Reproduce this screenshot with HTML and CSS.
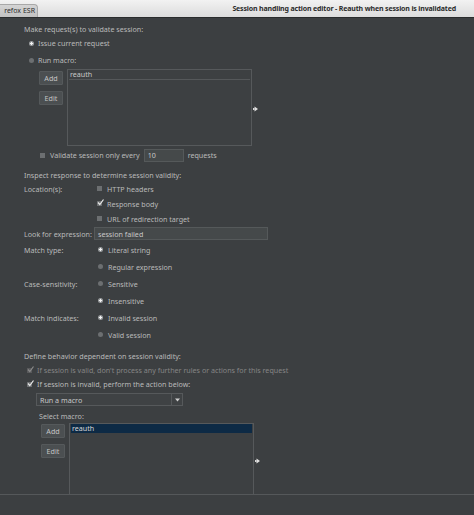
FILE: index.html
```html
<!DOCTYPE html>
<html>
<head>
<meta charset="utf-8">
<link rel="stylesheet" href="styles.css">
</head>
<body>
<div class="topbar">
  <div class="tab">refox ESR</div>
  <div class="title">Session handling action editor - Reauth when session is invalidated</div>
</div>
<div class="content">
  <div class="heading h-make">Make request(s) to validate session:</div>
  <div class="opt-row r-issue"><span class="radio on"></span>Issue current request</div>
  <div class="opt-row r-run"><span class="radio"></span>Run macro:</div>
  <div class="macro macro-top">
    <div class="btns"><div class="btn">Add</div><div class="btn">Edit</div></div>
    <div class="list"><div class="item">reauth</div></div>
    <svg class="arrow" width="5" height="6" viewBox="0 0 5 6"><rect x="0" y="2" width="1.5" height="2" fill="#d8d8d8"/><path d="M1.5 0.5 L5 3 L1.5 5.5 Z" fill="#e0e0e0"/></svg>
  </div>
  <div class="validate-row">
    <span class="cb"></span><span class="vtext">Validate session only every</span>
    <div class="input small">10</div><span>requests</span>
  </div>
  <div class="heading h-inspect">Inspect response to determine session validity:</div>
  <div class="grid">
    <div class="lbl">Location(s):</div>
    <div class="val"><span class="cb"></span>HTTP headers</div>
    <div class="lbl"></div>
    <div class="val"><span class="cb checked"><svg width="7" height="7" viewBox="0 0 7 7"><path d="M1 3.5 L2.8 5.5 L6.5 0.5" stroke="#e8e8e8" stroke-width="1.2" fill="none"/></svg></span>Response body</div>
    <div class="lbl"></div>
    <div class="val"><span class="cb"></span>URL of redirection target</div>
    <div class="lbl expr">Look for expression:</div>
    <div class="val expr"><div class="input wide">session failed</div></div>
    <div class="lbl m">Match type:</div>
    <div class="val m"><span class="radio on"></span>Literal string</div>
    <div class="lbl m"></div>
    <div class="val m"><span class="radio"></span>Regular expression</div>
    <div class="lbl m">Case-sensitivity:</div>
    <div class="val m"><span class="radio"></span>Sensitive</div>
    <div class="lbl m"></div>
    <div class="val m"><span class="radio on"></span>Insensitive</div>
    <div class="lbl m">Match indicates:</div>
    <div class="val m"><span class="radio on"></span>Invalid session</div>
    <div class="lbl m"></div>
    <div class="val m"><span class="radio"></span>Valid session</div>
  </div>
  <div class="heading h-define">Define behavior dependent on session validity:</div>
  <div class="beh-row dim"><span class="cb checked disabled"><svg width="7" height="7" viewBox="0 0 7 7"><path d="M1 3.5 L2.8 5.5 L6.5 0.5" stroke="#8a8a8a" stroke-width="1.2" fill="none"/></svg></span>If session is valid, don't process any further rules or actions for this request</div>
  <div class="beh-row"><span class="cb checked"><svg width="7" height="7" viewBox="0 0 7 7"><path d="M1 3.5 L2.8 5.5 L6.5 0.5" stroke="#e8e8e8" stroke-width="1.2" fill="none"/></svg></span>If session is invalid, perform the action below:</div>
  <div class="select">
    <span class="sel-text">Run a macro</span>
    <span class="sel-btn"><svg width="5" height="4" viewBox="0 0 5 4"><path d="M0 0.5 L5 0.5 L2.5 3.5 Z" fill="#cfcfcf"/></svg></span>
  </div>
  <div class="heading h-select">Select macro:</div>
  <div class="macro macro-bottom">
    <div class="btns"><div class="btn">Add</div><div class="btn">Edit</div></div>
    <div class="list"><div class="item selected">reauth</div></div>
    <svg class="arrow" width="5" height="6" viewBox="0 0 5 6"><rect x="0" y="2" width="1.5" height="2" fill="#d8d8d8"/><path d="M1.5 0.5 L5 3 L1.5 5.5 Z" fill="#e0e0e0"/></svg>
  </div>
</div>
<div class="footer"></div>
</body>
</html>
```

FILE: styles.css
```css
* { box-sizing: border-box; }
html, body { margin: 0; padding: 0; }
body {
  width: 474px;
  height: 515px;
  overflow: hidden;
  background: #3c3f41;
  color: #bababa;
  font-family: "Noto Sans", "DejaVu Sans", sans-serif;
  font-size: 7.15px;
  display: flex;
  flex-direction: column;
}
.topbar {
  height: 18px;
  flex: none;
  background: linear-gradient(#f2f2f2, #dcdcdc);
  border-bottom: 1px solid #2a2c2d;
  display: flex;
  align-items: flex-end;
  justify-content: space-between;
}
.tab {
  height: 13px;
  width: 38px;
  background: linear-gradient(#d4d4d4, #c2c2c2);
  border: 1px solid #a8a8a8;
  border-left: none;
  border-bottom: none;
  border-radius: 0 4px 0 0;
  color: #2e2e2e;
  font-size: 7px;
  line-height: 12px;
  text-align: right;
  padding-right: 2px;
  white-space: nowrap;
  overflow: hidden;
  direction: rtl;
}
.title {
  align-self: center;
  margin-right: 18px;
  color: #2b2b2b;
  font-weight: bold;
  font-size: 7px;
  letter-spacing: -0.15px;
}
.content {
  flex: 1;
  padding-left: 24px;
  display: flex;
  flex-direction: column;
}
.heading {
  height: 14px;
  display: flex;
  align-items: center;
  white-space: nowrap;
}
.h-make { margin-top: 4px; }
.opt-row {
  height: 14px;
  display: flex;
  align-items: center;
  padding-left: 5px;
  white-space: nowrap;
}
.r-run { margin-top: 3px; }
.radio {
  width: 5px;
  height: 5px;
  border-radius: 50%;
  background: #6c6f71;
  margin-right: 4px;
  flex: none;
}
.radio.on {
  background: radial-gradient(circle, #f4f4f4 0 1px, #9a9d9f 1.4px);
}
.cb {
  width: 5px;
  height: 5px;
  background: #6c6f71;
  margin-right: 5px;
  flex: none;
  position: relative;
}
.cb svg { position: absolute; left: 0; top: -2px; }
.cb.disabled { background: #58595b; }
.macro {
  display: flex;
  align-items: flex-start;
}
.macro-top { margin-top: 2px; height: 77px; }
.btns {
  display: flex;
  flex-direction: column;
  gap: 6px;
}
.btn {
  width: 24px;
  height: 14px;
  background: #4b4f51;
  border: 1px solid #55595b;
  border-radius: 1px;
  color: #c4c4c4;
  display: flex;
  align-items: center;
  justify-content: center;
}
.macro-top .btns { margin-left: 15px; margin-top: 2px; }
.list {
  border: 1px solid #56595b;
  background: #3d4042;
  padding: 0 1px;
}
.macro-top .list { margin-left: 4px; width: 185px; height: 77px; }
.item {
  height: 10px;
  line-height: 9px;
  border-bottom: 1px solid #55585a;
  padding-left: 1px;
  color: #c8c8c8;
}
.arrow { align-self: center; margin-left: 1px; flex: none; }
.macro-top .arrow { margin-top: 2px; }
.validate-row {
  margin-top: 2px;
  height: 14px;
  display: flex;
  align-items: center;
  padding-left: 16px;
  white-space: nowrap;
}
.vtext { margin-right: 4px; }
.input {
  height: 13px;
  background: #45494a;
  border: 1px solid #55595a;
  color: #c8c8c8;
  display: flex;
  align-items: center;
  padding-left: 3px;
}
.input.small { width: 40px; margin-right: 4px; }
.input.wide { width: 174px; height: 13px; }
.h-inspect { margin-top: 7px; height: 12px; }
.grid {
  display: grid;
  grid-template-columns: 70px 1fr;
  grid-template-rows: 15px 15px 15px 15px 17px 17px 17px 17px 17px 17px;
}
.lbl, .val {
  display: flex;
  align-items: center;
  white-space: nowrap;
}
.val { padding-left: 3px; }
.val .cb { margin-right: 5px; }
.val.m { padding-left: 4px; }
.val.m .radio { margin-right: 5px; }
.lbl.expr, .val.expr { padding-left: 0; }
.h-define { margin-top: 6px; }
.beh-row {
  height: 14px;
  display: flex;
  align-items: center;
  padding-left: 3px;
  white-space: nowrap;
}
.beh-row .cb { margin-right: 5px; }
.dim { color: #858585; }
.select {
  margin-top: 2px;
  margin-left: 12px;
  width: 147px;
  height: 13px;
  border: 1px solid #56595b;
  background: #3f4244;
  display: flex;
  align-items: center;
}
.sel-text { flex: 1; padding-left: 3px; color: #c8c8c8; }
.sel-btn {
  width: 11px;
  height: 100%;
  border-left: 1px solid #56595b;
  display: flex;
  align-items: center;
  justify-content: center;
}
.h-select { margin-top: 3px; padding-left: 15px; height: 13px; }
.macro-bottom { margin-top: 1px; flex: 1; }
.macro-bottom .btns { margin-left: 17px; margin-top: 1px; }
.macro-bottom .list {
  margin-left: 4px;
  width: 185px;
  height: 100%;
  border-bottom: none;
}
.macro-bottom .arrow { align-self: flex-start; margin-top: 35px; }
.item.selected {
  background: #0d2a45;
  border-bottom: none;
  height: 9px;
  color: #d8d8d8;
}
.footer {
  height: 21px;
  flex: none;
  border-top: 1px solid #55585a;
  background: #3c3f41;
}
```
